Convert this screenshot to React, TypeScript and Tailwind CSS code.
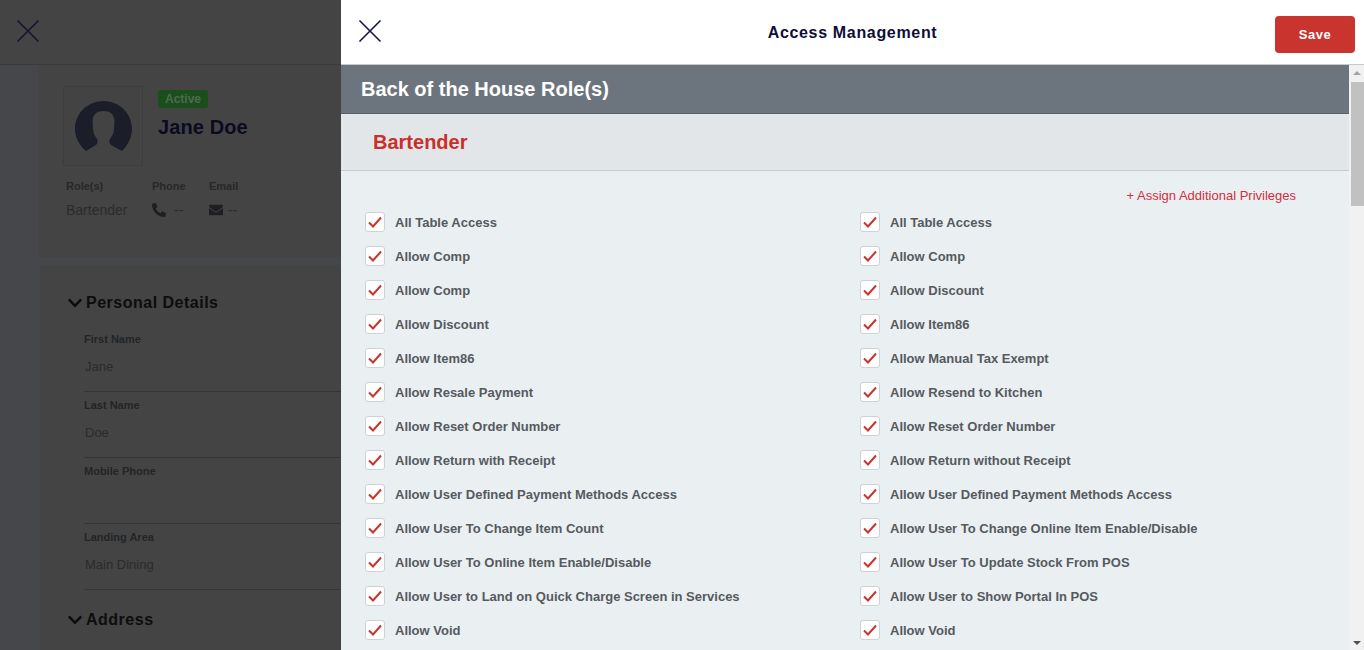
import React from "react";
import { FaPhoneAlt, FaEnvelope, FaChevronDown } from "react-icons/fa";

const left = ["All Table Access","Allow Comp","Allow Comp","Allow Discount","Allow Item86","Allow Resale Payment","Allow Reset Order Number","Allow Return with Receipt","Allow User Defined Payment Methods Access","Allow User To Change Item Count","Allow User To Online Item Enable/Disable","Allow User to Land on Quick Charge Screen in Services","Allow Void"];
const right = ["All Table Access","Allow Comp","Allow Discount","Allow Item86","Allow Manual Tax Exempt","Allow Resend to Kitchen","Allow Reset Order Number","Allow Return without Receipt","Allow User Defined Payment Methods Access","Allow User To Change Online Item Enable/Disable","Allow User To Update Stock From POS","Allow User to Show Portal In POS","Allow Void"];

function CloseIcon({ color }: { color: string }) {
  return (
    <svg width="24" height="24" viewBox="0 0 24 24" fill="none" stroke={color} strokeWidth="1.6">
      <path d="M1.500 1.500 L22.500 22.500 M22.500 1.500 L1.500 22.500" />
    </svg>
  );
}

function Row({ label }: { label: string }) {
  return (
    <div className="flex h-[34px] items-center">
      <span className="mb-[2px] flex h-5 w-5 items-center justify-center rounded-[3px] border border-[#cfd2d4] bg-white">
        <svg width="14" height="12" viewBox="0 0 14 12" fill="none" stroke="#c9342e" strokeWidth="2">
          <path d="M1 6.500 L5 10.500 L13 1.500" />
        </svg>
      </span>
      <span className="ml-[10px] text-[13px] font-bold text-[#555a5e]">{label}</span>
    </div>
  );
}

function Field({ label, value }: { label: string; value: string }) {
  return (
    <div className="h-[66px] border-b border-[#353535] pt-[6px]">
      <div className="text-[11px] leading-[14px] font-bold text-[#222527]">{label}</div>
      <div className="mt-[11px] h-5 pl-[1px] text-[13px] leading-5 text-[#2b2b2b]">{value}</div>
    </div>
  );
}

export default function App() {
  return (
    <div className="flex h-[650px] w-[1364px] overflow-hidden font-['Liberation_Sans',Arial,sans-serif]">
      <aside className="h-full w-[341px] shrink-0 overflow-hidden bg-[#45474a]">
        <header className="flex h-[65px] items-center border-b border-[#3a3a3a] bg-[#444444] pb-[3px] pl-[16px]">
          <CloseIcon color="#14142e" />
        </header>
        <section className="ml-[39px] h-[192px] rounded-l-[3px] bg-[#444444] pt-[21px] pl-[24px]">
          <div className="flex">
            <div className="flex h-20 w-20 items-center justify-center rounded-[2px] border border-[#3d3d3d] bg-[#434343]">
              <svg width="57" height="50" viewBox="0 0 57 50">
                <path fill="#1b1d28" d="M11 50 C4 44 0 36 0 28 C0 12 13 0 28.500 0 C44 0 57 12 57 28 C57 36 53 44 47 50 L36 44 C34 42 34 40 35 38 C37 35 39 32 39 28 L39.500 20 C39 13 35 10 28.500 10 C22 10 18 13 17.500 20 L18 28 C18 32 20 35 22 38 C23 40 23 42 21 44 Z" />
              </svg>
            </div>
            <div className="ml-[15px] pt-[4px]">
              <div className="flex h-[18px] w-[50px] items-center justify-center rounded-[3px] bg-[#1a4f1c] text-[12px] font-bold text-[#4d6a50]">Active</div>
              <div className="mt-[7px] text-[20px] leading-6 font-bold tracking-[0.1px] text-[#0b0b20]">Jane Doe</div>
            </div>
          </div>
          <div className="mt-[13px] flex pl-[3px]">
            <div className="w-[86px]">
              <div className="text-[11px] leading-[14px] font-bold text-[#26282a]">Role(s)</div>
              <div className="mt-[7px] text-[14px] leading-5 text-[#2b2b2b]">Bartender</div>
            </div>
            <div className="w-[57px]">
              <div className="text-[11px] leading-[14px] font-bold text-[#26282a]">Phone</div>
              <div className="mt-[7px] flex h-5 items-center text-[14px] text-[#2b2b2b]"><FaPhoneAlt className="h-[14px] w-[14px] text-[#1d1f22]" /><span className="ml-[8px]">--</span></div>
            </div>
            <div>
              <div className="text-[11px] leading-[14px] font-bold text-[#26282a]">Email</div>
              <div className="mt-[7px] flex h-5 items-center text-[14px] text-[#2b2b2b]"><FaEnvelope className="h-[14px] w-[14px] text-[#1d1f22]" /><span className="ml-[5px]">--</span></div>
            </div>
          </div>
        </section>
        <section className="mt-[8px] ml-[40px] h-[400px] bg-[#444444] pt-[29px] pl-[28px]">
          <div className="flex h-[18px] items-center text-[16px] font-bold tracking-[0.5px] text-[#0d0d0d]">
            <FaChevronDown className="h-4 w-[14px] text-[#0d0d0d]" /><span className="ml-[4px]">Personal Details</span>
          </div>
          <div className="mt-[14px] ml-[16px]">
            <Field label="First Name" value="Jane" />
            <Field label="Last Name" value="Doe" />
            <Field label="Mobile Phone" value="" />
            <Field label="Landing Area" value="Main Dining" />
          </div>
          <div className="mt-[21px] flex h-[18px] items-center text-[16px] font-bold tracking-[0.5px] text-[#0d0d0d]">
            <FaChevronDown className="h-4 w-[14px] text-[#0d0d0d]" /><span className="ml-[4px]">Address</span>
          </div>
        </section>
      </aside>

      <main className="flex h-full min-w-0 flex-1 flex-col bg-white">
        <header className="flex h-[65px] shrink-0 items-center justify-between border-b border-[#c9c9c9] pr-[9px] pl-[17px]">
          <span className="mb-[3px]"><CloseIcon color="#14144a" /></span>
          <h1 className="mt-[2px] mr-[-48px] text-[16px] font-bold tracking-[0.67px] text-[#0e0e38]">Access Management</h1>
          <button className="mt-[5px] h-[37px] w-20 rounded-[4px] bg-[#c9352e] text-[13px] font-bold tracking-[0.5px] text-white">Save</button>
        </header>
        <div className="flex min-h-0 flex-1">
          <div className="min-w-0 flex-1 overflow-hidden bg-[#eaeff2]">
            <div className="flex h-[49px] items-center border-b border-[#5a6068] bg-[#6c757d] pl-[20px] text-[20px] font-bold text-white">Back of the House Role(s)</div>
            <div className="flex h-[57px] items-center border-b border-[#c6cacd] bg-[#e3e6e9] pl-[32px] text-[20px] font-bold text-[#c9302c]">Bartender</div>
            <div className="flex h-[35px] items-end justify-end pr-[53px] pb-[2px] text-[13px] leading-4 text-[#d0303f]">+ Assign Additional Privileges</div>
            <div className="grid grid-cols-[495px_1fr] pl-[24px]">
              <div>{left.map((t, i) => <Row key={i} label={t} />)}</div>
              <div>{right.map((t, i) => <Row key={i} label={t} />)}</div>
            </div>
          </div>
          <div className="flex w-[15px] shrink-0 flex-col items-center justify-between bg-[#f1f1f1]">
            <div className="flex w-full flex-col items-center">
              <div className="mt-[6px] h-0 w-0 border-x-[4px] border-b-[4px] border-x-transparent border-b-[#a3a3a3]" />
              <div className="mt-[7px] ml-[2px] h-[124px] w-[13px] bg-[#c1c1c1]" />
            </div>
            <div className="mb-[5px] h-0 w-0 border-x-[4px] border-t-[4px] border-x-transparent border-t-[#505050]" />
          </div>
        </div>
      </main>
    </div>
  );
}
